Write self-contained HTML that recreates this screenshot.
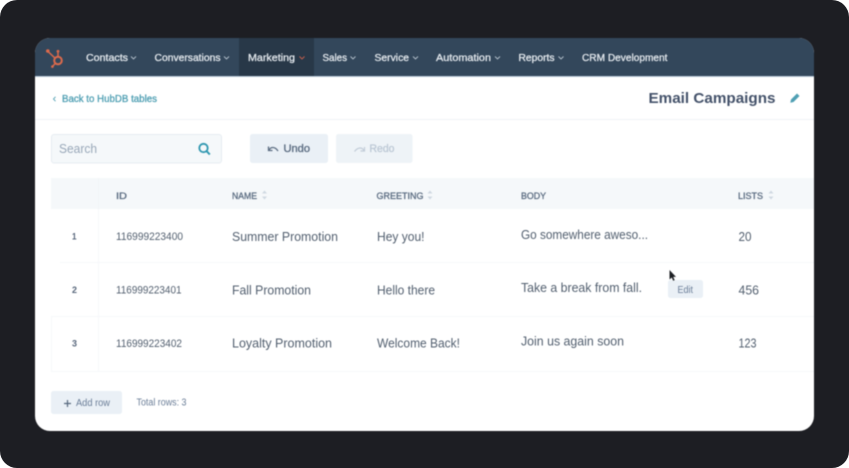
<!DOCTYPE html>
<html><head><meta charset="utf-8">
<style>
html,body{margin:0;padding:0;width:849px;height:468px;overflow:hidden;background:#fff}
svg{display:block}
text{font-family:"Liberation Sans",sans-serif}
.blur{filter:blur(.45px)}
.nav{font-size:10.5px;fill:#e3e8ed;stroke:#e3e8ed;stroke-width:.3px}
.h{font-size:9px;fill:#5c6d82;stroke:#5c6d82;stroke-width:.3px}
.c{font-size:12.5px;fill:#525f6f}
.id{font-size:11px;fill:#525f6f}
.n{font-size:9px;font-weight:700;fill:#56657a}
</style></head><body>
<svg width="849" height="468" viewBox="0 0 849 468" xmlns="http://www.w3.org/2000/svg">
<rect x="0" y="0" width="849" height="468" rx="17" fill="#1d1e23"/>
<g class="blur">
<rect x="35" y="38" width="779" height="393" rx="15" fill="#fff"/>
<path d="M35 76V53a15 15 0 0 1 15-15H799a15 15 0 0 1 15 15V76Z" fill="#33475b"/>
<rect x="35" y="76" width="779" height="1" fill="#b9c9d8"/>
<rect x="239" y="38" width="75" height="38" fill="#283848"/>

<!-- logo -->
<g fill="none" stroke="#dc6a4c">
<circle cx="58" cy="60.500" r="3.800" stroke-width="2"/>
<path d="M58 56.500V52M48.500 52L54.900 58M55.200 63.500L52.500 66.500" stroke-width="1.500"/>
</g>
<circle cx="47.800" cy="51" r="1.800" fill="#dc6a4c"/>
<circle cx="58" cy="51.300" r="1.400" fill="#dc6a4c"/>
<circle cx="52.400" cy="66.600" r="1.300" fill="#dc6a4c"/>

<!-- nav -->
<text class="nav" x="86" y="61" textLength="42" lengthAdjust="spacingAndGlyphs">Contacts</text>
<text class="nav" x="154.500" y="61" textLength="66" lengthAdjust="spacingAndGlyphs">Conversations</text>
<text class="nav" x="248" y="61" textLength="47" lengthAdjust="spacingAndGlyphs">Marketing</text>
<text class="nav" x="322.500" y="61" textLength="24.500" lengthAdjust="spacingAndGlyphs">Sales</text>
<text class="nav" x="374.500" y="61" textLength="34.500" lengthAdjust="spacingAndGlyphs">Service</text>
<text class="nav" x="436" y="61" textLength="55" lengthAdjust="spacingAndGlyphs">Automation</text>
<text class="nav" x="518.500" y="61" textLength="36" lengthAdjust="spacingAndGlyphs">Reports</text>
<text class="nav" x="582" y="61" textLength="85.500" lengthAdjust="spacingAndGlyphs">CRM Development</text>
<path d="M131 56.500l2.500 2.500 2.500-2.500M224 56.500l2.500 2.500 2.500-2.500M350.500 56.500l2.500 2.500 2.500-2.500M413 56.500l2.500 2.500 2.500-2.500M495 56.500l2.500 2.500 2.500-2.500M558.500 56.500l2.500 2.500 2.500-2.500" fill="none" stroke="#b4c0cc" stroke-width=".9"/>
<path d="M299.500 56.500l2.500 2.500 2.500-2.500" fill="none" stroke="#c9604d" stroke-width=".9"/>

<!-- sub header -->
<path d="M55.500 96.800l-2 2.200 2 2.200" fill="none" stroke="#4f9fb3" stroke-width=".9"/>
<text x="62" y="102" font-size="10" fill="#4f9fb3" stroke="#4f9fb3" stroke-width=".3" textLength="95" lengthAdjust="spacingAndGlyphs">Back to HubDB tables</text>
<text x="648.500" y="103" font-size="15" font-weight="700" fill="#44526a" textLength="127" lengthAdjust="spacingAndGlyphs">Email Campaigns</text>
<path d="M791 99.500l6-6 2.500 2.500-6 6-3.200.7Z" fill="#4f9fb3"/>
<rect x="35" y="119" width="779" height="1" fill="#f0f3f6"/>

<!-- search -->
<rect x="51.500" y="134.500" width="170" height="28.500" rx="2.500" fill="#f5f8fa" stroke="#e6ecf2"/>
<text x="59" y="153" font-size="13" fill="#98a7b8" textLength="38" lengthAdjust="spacingAndGlyphs">Search</text>
<circle cx="203.500" cy="148" r="4.200" fill="none" stroke="#2f97b0" stroke-width="1.800"/>
<path d="M206.500 151l3.300 3.500" stroke="#2f97b0" stroke-width="2" fill="none"/>

<!-- undo/redo -->
<rect x="250" y="134" width="78" height="29" rx="2.500" fill="#eaf0f6"/>
<path d="M269 150c2-3.500 6-3.500 9 1M268.500 146.500v4h4" fill="none" stroke="#5c6d82" stroke-width="1.300"/>
<text x="283.500" y="152" font-size="11" fill="#5c6d82" stroke="#5c6d82" stroke-width=".35" textLength="26.500" lengthAdjust="spacingAndGlyphs">Undo</text>
<rect x="336" y="134" width="76.500" height="29" rx="2.500" fill="#eef3f7"/>
<path d="M364 150.500c-2-3.500-6-3.500-9.500 1M364.500 147v4h-4" fill="none" stroke="#c2ccd8" stroke-width="1.200"/>
<text x="369.500" y="152" font-size="11" fill="#bcc8d5" stroke="#bcc8d5" stroke-width=".3" textLength="25" lengthAdjust="spacingAndGlyphs">Redo</text>

<!-- table header -->
<rect x="51" y="178" width="763" height="31" fill="#f5f8fa"/>
<rect x="98" y="178" width="1" height="31" fill="#f1f4f7"/>
<text class="h" x="116" y="199" textLength="11" lengthAdjust="spacingAndGlyphs">ID</text>
<text class="h" x="232" y="199" textLength="25" lengthAdjust="spacingAndGlyphs">NAME</text>
<text class="h" x="376.500" y="199" textLength="47" lengthAdjust="spacingAndGlyphs">GREETING</text>
<text class="h" x="521" y="199" textLength="25" lengthAdjust="spacingAndGlyphs">BODY</text>
<text class="h" x="738" y="199" textLength="25" lengthAdjust="spacingAndGlyphs">LISTS</text>
<g fill="#d0d9e2">
<path d="M262 193.500l2.500-3 2.500 3ZM262 196.500l2.500 3 2.500-3Z"/>
<path d="M427.500 193.500l2.500-3 2.500 3ZM427.500 196.500l2.500 3 2.500-3Z"/>
<path d="M768.500 193.500l2.500-3 2.500 3ZM768.500 196.500l2.500 3 2.500-3Z"/>
</g>

<!-- rows lines -->
<rect x="60" y="262" width="754" height="1" fill="#f6f8fa"/>
<rect x="51" y="316" width="763" height="1" fill="#f6f8fa"/>
<rect x="51" y="371" width="763" height="1" fill="#f6f8fa"/>
<rect x="98" y="209" width="1" height="162" fill="#f6f8fa"/>
<rect x="51" y="316" width="1" height="55" fill="#f6f8fa"/>

<!-- row 1 -->
<text class="n" x="72" y="239.500" textLength="4.500" lengthAdjust="spacingAndGlyphs">1</text>
<text class="id" x="116" y="240" textLength="67" lengthAdjust="spacingAndGlyphs">116999223400</text>
<text class="c" x="232" y="241" textLength="106" lengthAdjust="spacingAndGlyphs">Summer Promotion</text>
<text class="c" x="377" y="241" textLength="47.500" lengthAdjust="spacingAndGlyphs">Hey you!</text>
<text class="c" x="521" y="239" textLength="127" lengthAdjust="spacingAndGlyphs">Go somewhere aweso...</text>
<text class="c" x="738.500" y="241" textLength="13" lengthAdjust="spacingAndGlyphs">20</text>

<!-- row 2 -->
<text class="n" x="72" y="293" textLength="5" lengthAdjust="spacingAndGlyphs">2</text>
<text class="id" x="116" y="293.500" textLength="65.500" lengthAdjust="spacingAndGlyphs">116999223401</text>
<text class="c" x="232" y="294.500" textLength="79" lengthAdjust="spacingAndGlyphs">Fall Promotion</text>
<text class="c" x="377" y="294.500" textLength="58" lengthAdjust="spacingAndGlyphs">Hello there</text>
<text class="c" x="521" y="292" textLength="121" lengthAdjust="spacingAndGlyphs">Take a break from fall.</text>
<text class="c" x="738.500" y="294.500" textLength="20.500" lengthAdjust="spacingAndGlyphs">456</text>

<!-- row 3 -->
<text class="n" x="72" y="346.500" textLength="5" lengthAdjust="spacingAndGlyphs">3</text>
<text class="id" x="116" y="347" textLength="66" lengthAdjust="spacingAndGlyphs">116999223402</text>
<text class="c" x="232" y="347.500" textLength="100" lengthAdjust="spacingAndGlyphs">Loyalty Promotion</text>
<text class="c" x="377" y="347.500" textLength="83" lengthAdjust="spacingAndGlyphs">Welcome Back!</text>
<text class="c" x="521" y="345.500" textLength="103" lengthAdjust="spacingAndGlyphs">Join us again soon</text>
<text class="c" x="738.500" y="347.500" textLength="18" lengthAdjust="spacingAndGlyphs">123</text>

<!-- edit -->
<rect x="668" y="280" width="35" height="18" rx="2.500" fill="#eaf0f6"/>
<text x="677.500" y="293" font-size="10" fill="#6a7d97" textLength="15.500" lengthAdjust="spacingAndGlyphs">Edit</text>
<path d="M669.500 270v9.500l2.200-2 1.500 3.300 1.500-.7-1.500-3.200h2.800Z" fill="#1d2024"/>

<!-- footer -->
<rect x="51" y="391" width="71" height="23" rx="2.500" fill="#eaf0f6"/>
<path d="M67.500 400v7M64 403.500h7" stroke="#56687e" stroke-width="1.200" fill="none"/>
<text x="76" y="406" font-size="10" fill="#6a7d97" textLength="34" lengthAdjust="spacingAndGlyphs">Add row</text>
<text x="136.500" y="405.500" font-size="10" fill="#6a7d97" textLength="50" lengthAdjust="spacingAndGlyphs">Total rows: 3</text>
</g>
</svg>
</body></html>
